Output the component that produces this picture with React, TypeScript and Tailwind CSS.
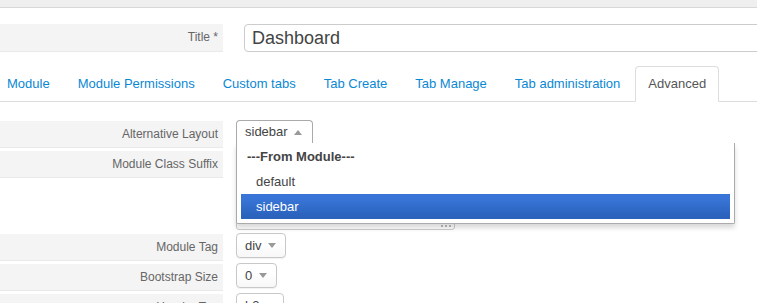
import React from "react";

const Caret = ({ up = false }: { up?: boolean }) => (
  <svg width="8" height="5" viewBox="0 0 8 5" className="block">
    {up ? <path d="M0 5 L4 0 L8 5 Z" fill="#999" /> : <path d="M0 0 L8 0 L4 5 Z" fill="#999" />}
  </svg>
);

const Label = ({ children }: { children: React.ReactNode }) => (
  <div className="mt-[1px] w-[223px] h-[27px] shrink-0 bg-[#f4f4f4] border-b border-[#e9e9e9] text-right pr-[5px] text-[12px] leading-[26px] text-[#666]">
    {children}
  </div>
);

const Select = ({ value, width }: { value: string; width: string }) => (
  <div
    className={`${width} h-[25px] border border-[#c8c8c8] rounded-[4px] bg-[linear-gradient(#ffffff_40%,#f7f7f7_100%)] shadow-[0_1px_1px_rgba(0,0,0,0.06)] flex items-center pl-[8px] pr-[9px] text-[13px] text-[#444]`}
  >
    <span className="leading-[22px]">{value}</span>
    <span className="ml-auto">
      <Caret />
    </span>
  </div>
);

export default function App() {
  const tabs = [
    "Module",
    "Module Permissions",
    "Custom tabs",
    "Tab Create",
    "Tab Manage",
    "Tab administration",
  ];
  return (
    <div className="w-[757px] h-[303px] overflow-hidden bg-white font-['Liberation_Sans',Arial,sans-serif]">
      <div className="h-[8px] bg-[#efefef] border-b border-[#d8d8d8]" />

      {/* Title row */}
      <div className="mt-[16px] flex items-start">
        <div className="w-[223px] h-[28px] shrink-0 bg-[#f4f4f4] border-b border-[#e9e9e9] text-right pr-[5px] text-[12px] leading-[27px] text-[#666]">
          Title *
        </div>
        <div className="ml-[21px] w-[560px] shrink-0 h-[28px] border border-[#cccccc] rounded-[4px] pl-[7px] text-[18px] leading-[26px] text-[#444]">
          Dashboard
        </div>
      </div>

      {/* Tabs */}
      <div className="mt-[14px] -ml-[6px] flex border-b border-[#dddddd] text-[13px] leading-[18px]">
        {tabs.map((t) => (
          <div
            key={t}
            className="px-[12px] py-[8px] mr-[2px] -mb-px border border-transparent text-[#0a88d4] whitespace-nowrap"
          >
            {t}
          </div>
        ))}
        <div className="px-[12px] py-[8px] mr-[2px] -mb-px border border-[#dddddd] border-b-white rounded-t-[4px] bg-white text-[#555] whitespace-nowrap">
          Advanced
        </div>
      </div>

      {/* Fields */}
      <div className="mt-[18px] flex flex-col">
        {/* Alternative Layout */}
        <div className="flex items-start h-[30px]">
          <Label>Alternative Layout</Label>
          <div className="ml-[13px] relative z-10">
            <div className="w-[77px] h-[23px] border border-b-0 border-[#aaaaaa] rounded-t-[4px] bg-white flex items-center pl-[8px] pr-[10px] text-[13px] text-[#444]">
              <span className="leading-[22px]">sidebar</span>
              <span className="ml-auto">
                <Caret up />
              </span>
            </div>
            <div className="absolute left-0 top-[23px] w-[499px] bg-white border border-t-0 border-[#aaaaaa] shadow-[0_4px_5px_rgba(0,0,0,0.15)] rounded-b-[2px]">
              <ul className="mt-[1px] mr-[4px] mb-[4px] pl-[4px] text-[13px] leading-[15px] text-[#444]">
                <li className="px-[6px] py-[5px] font-bold">---From Module---</li>
                <li className="pl-[15px] pr-[6px] py-[5px]">default</li>
                <li className="pl-[15px] pr-[6px] py-[5px] text-white bg-[linear-gradient(#3875d7_20%,#2a62bc_90%)]">
                  sidebar
                </li>
              </ul>
            </div>
          </div>
        </div>

        {/* Module Class Suffix */}
        <div className="flex items-start h-[83px]">
          <Label>Module Class Suffix</Label>
          <div className="ml-[13px] mt-[1px] relative w-[219px] h-[79px] border border-[#cccccc] rounded-[3px] bg-white">
            <div className="absolute right-[3px] bottom-[2px] flex gap-[2px]">
              <span className="block w-[2px] h-[2px] bg-[#bbbbbb]" />
              <span className="block w-[2px] h-[2px] bg-[#bbbbbb]" />
              <span className="block w-[2px] h-[2px] bg-[#bbbbbb]" />
            </div>
          </div>
        </div>

        {/* Module Tag */}
        <div className="flex items-start h-[30px]">
          <Label>Module Tag</Label>
          <div className="ml-[13px]">
            <Select value="div" width="w-[50px]" />
          </div>
        </div>

        {/* Bootstrap Size */}
        <div className="flex items-start h-[30px]">
          <Label>Bootstrap Size</Label>
          <div className="ml-[13px]">
            <Select value="0" width="w-[41px]" />
          </div>
        </div>

        {/* Header Tag */}
        <div className="flex items-start h-[30px]">
          <Label>Header Tag</Label>
          <div className="ml-[13px]">
            <Select value="h3" width="w-[48px]" />
          </div>
        </div>
      </div>
    </div>
  );
}
